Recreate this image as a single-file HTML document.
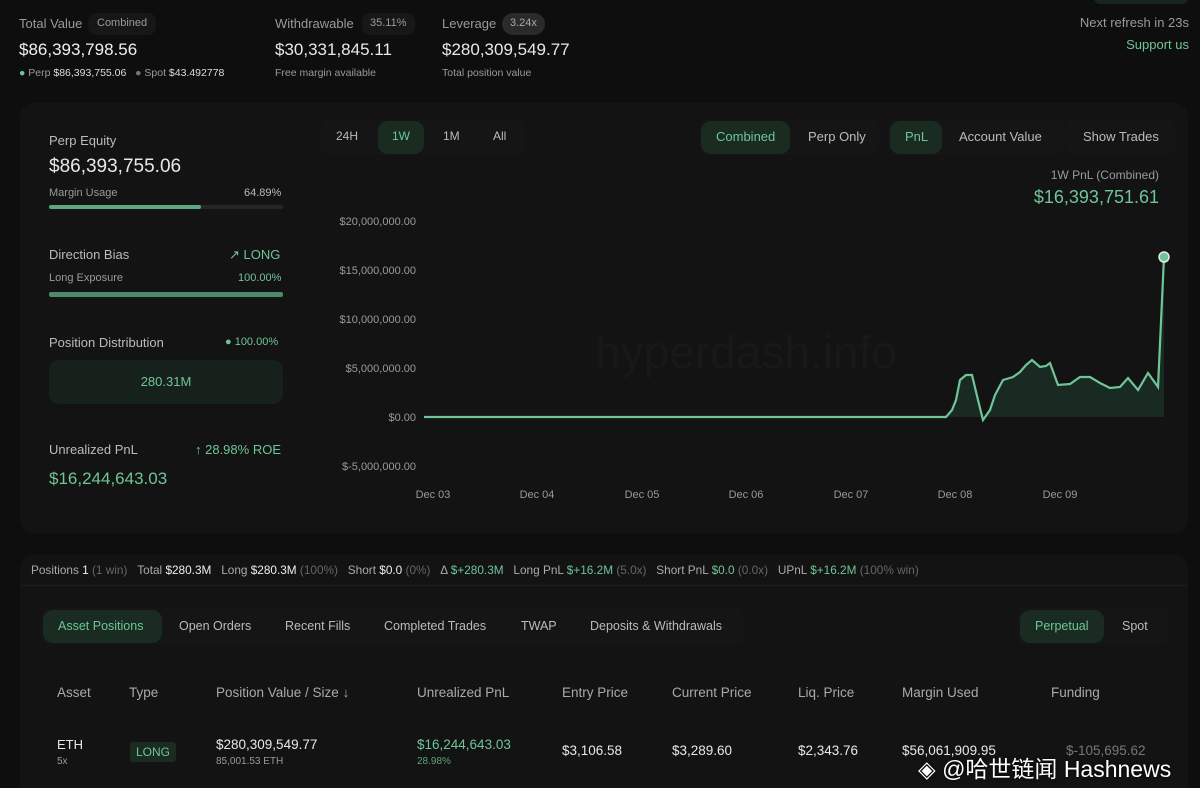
<!DOCTYPE html>
<html><head><meta charset="utf-8"><style>
*{box-sizing:border-box;margin:0;padding:0}
html,body{width:1200px;height:788px;overflow:hidden}
body{background:#0e0e0e;font-family:"Liberation Sans",sans-serif;color:#e8e8e8;position:relative}
.a{position:absolute;white-space:nowrap}
.g{color:#6fc597}.m{color:#9a9a9a}
.pill{position:absolute;border-radius:10px;background:#1b1b1b}
.sel{background:#1a2b22;color:#6fc597}
.card{position:absolute;background:#131313;border-radius:14px}
</style></head><body>
<!-- top -->
<div class="a m" style="left:19px;top:16px;font-size:13px">Total Value</div>
<div class="a" style="left:88px;top:13px;height:22px;padding:4px 9px;border-radius:8px;background:#171717;font-size:11px;color:#9a9a9a">Combined</div>
<div class="a" style="left:19px;top:40px;font-size:17px;color:#f0f0f0">$86,393,798.56</div>
<div class="a" style="left:19px;top:67px;font-size:10.5px;color:#9a9a9a"><span class="g">●</span> Perp <span style="color:#ddd">$86,393,755.06</span> &nbsp;&nbsp;<span style="color:#777">●</span> Spot <span style="color:#ddd">$43.492778</span></div>
<div class="a m" style="left:275px;top:16px;font-size:13px">Withdrawable</div>
<div class="a" style="left:362px;top:13px;height:22px;padding:4px 8px;border-radius:8px;background:#171717;font-size:11px;color:#9a9a9a">35.11%</div>
<div class="a" style="left:275px;top:40px;font-size:17px">$30,331,845.11</div>
<div class="a m" style="left:275px;top:67px;font-size:10.5px">Free margin available</div>
<div class="a m" style="left:442px;top:16px;font-size:13px">Leverage</div>
<div class="a" style="left:502px;top:13px;height:22px;padding:4px 8px;border-radius:11px;background:#2a2a2a;font-size:11px;color:#aaa">3.24x</div>
<div class="a" style="left:442px;top:40px;font-size:17px">$280,309,549.77</div>
<div class="a m" style="left:442px;top:67px;font-size:10.5px">Total position value</div>
<div class="a" style="left:1094px;top:-10px;width:94px;height:14px;border-radius:6px;background:#17251d"></div>
<div class="a m" style="right:11px;top:15px;font-size:13px">Next refresh in 23s</div>
<div class="a g" style="right:11px;top:37px;font-size:13px">Support us</div>

<!-- main card -->
<div class="card" style="left:20px;top:103px;width:1168px;height:430px"></div>
<div class="a" style="left:49px;top:133px;font-size:13px;color:#bbb">Perp Equity</div>
<div class="a" style="left:49px;top:156px;font-size:19px">$86,393,755.06</div>
<div class="a m" style="left:49px;top:187px;font-size:11px">Margin Usage</div>
<div class="a" style="left:244px;top:187px;font-size:11px;color:#bbb">64.89%</div>
<div class="a" style="left:49px;top:205px;width:234px;height:4px;border-radius:2px;background:#262626"></div>
<div class="a" style="left:49px;top:205px;width:152px;height:4px;border-radius:2px;background:#5fa57f"></div>
<div class="a" style="left:49px;top:247px;font-size:13px;color:#bbb">Direction Bias</div>
<div class="a g" style="left:229px;top:247px;font-size:13px">↗ LONG</div>
<div class="a m" style="left:49px;top:272px;font-size:11px">Long Exposure</div>
<div class="a g" style="left:238px;top:272px;font-size:11px">100.00%</div>
<div class="a" style="left:49px;top:292px;width:234px;height:5px;border-radius:2px;background:#4e8a6a"></div>
<div class="a" style="left:49px;top:335px;font-size:13px;color:#bbb">Position Distribution</div>
<div class="a g" style="left:225px;top:336px;font-size:11px">● 100.00%</div>
<div class="a g" style="left:49px;top:360px;width:234px;height:44px;border-radius:10px;background:#17211b;text-align:center;line-height:44px;font-size:13px">280.31M</div>
<div class="a" style="left:49px;top:442px;font-size:13px;color:#bbb">Unrealized PnL</div>
<div class="a g" style="left:195px;top:442px;font-size:13px">↑ 28.98% ROE</div>
<div class="a g" style="left:49px;top:469px;font-size:17px">$16,244,643.03</div>

<!-- time tabs -->
<div class="pill" style="left:320px;top:119px;width:205px;height:36px;background:#151515"></div>
<div class="a" style="left:336px;top:129px;font-size:12px;color:#bbb">24H</div>
<div class="pill sel" style="left:378px;top:121px;width:46px;height:33px"></div>
<div class="a g" style="left:392px;top:129px;font-size:12px">1W</div>
<div class="a" style="left:443px;top:129px;font-size:12px;color:#bbb">1M</div>
<div class="a" style="left:493px;top:129px;font-size:12px;color:#bbb">All</div>
<div class="pill" style="left:699px;top:119px;width:180px;height:36px;background:#151515"></div>
<div class="pill sel" style="left:701px;top:121px;width:89px;height:33px"></div>
<div class="a g" style="left:716px;top:129px;font-size:13px">Combined</div>
<div class="a" style="left:808px;top:129px;font-size:13px;color:#bbb">Perp Only</div>
<div class="pill" style="left:888px;top:119px;width:177px;height:36px;background:#151515"></div>
<div class="pill sel" style="left:890px;top:121px;width:52px;height:33px"></div>
<div class="a g" style="left:905px;top:129px;font-size:13px">PnL</div>
<div class="a" style="left:959px;top:129px;font-size:13px;color:#bbb">Account Value</div>
<div class="pill" style="left:1066px;top:119px;width:110px;height:36px;background:#151515"></div>
<div class="a" style="left:1083px;top:129px;font-size:13px;color:#bbb">Show Trades</div>
<div class="a m" style="right:41px;top:168px;font-size:12px">1W PnL (Combined)</div>
<div class="a g" style="right:41px;top:187px;font-size:18px">$16,393,751.61</div>

<!-- chart -->
<svg class="a" style="left:0;top:0" width="1200" height="540">
<g font-family="Liberation Sans" font-size="11" fill="#9a9a9a" text-anchor="end">
<text x="416" y="225">$20,000,000.00</text><text x="416" y="274">$15,000,000.00</text>
<text x="416" y="323">$10,000,000.00</text><text x="416" y="372">$5,000,000.00</text>
<text x="416" y="421">$0.00</text><text x="416" y="470">$-5,000,000.00</text>
</g>
<g font-family="Liberation Sans" font-size="11" fill="#9a9a9a" text-anchor="middle">
<text x="433" y="498">Dec 03</text><text x="537" y="498">Dec 04</text><text x="642" y="498">Dec 05</text><text x="746" y="498">Dec 06</text><text x="851" y="498">Dec 07</text><text x="955" y="498">Dec 08</text><text x="1060" y="498">Dec 09</text>
</g>
<text x="746" y="368" font-family="Liberation Sans" font-size="46" fill="#181818" text-anchor="middle">hyperdash.info</text>
<path d="M946,417 L952,410 L956,400 L960,380 L966,375 L972,375 L978,400 L983,420 L990,410 L995,395 L1003,380 L1013,377 L1020,372 L1026,365 L1032,360 L1040,367 L1046,366 L1050,363 L1058,385 L1070,384 L1080,377 L1090,377 L1100,383 L1110,388 L1120,387 L1128,378 L1138,390 L1148,373 L1158,387 L1164,257 L1164,417 Z" fill="#1c3127" opacity=".8"/>
<path d="M424,417 L946,417 L952,410 L956,400 L960,380 L966,375 L972,375 L978,400 L983,420 L990,410 L995,395 L1003,380 L1013,377 L1020,372 L1026,365 L1032,360 L1040,367 L1046,366 L1050,363 L1058,385 L1070,384 L1080,377 L1090,377 L1100,383 L1110,388 L1120,387 L1128,378 L1138,390 L1148,373 L1158,387 L1164,257" fill="none" stroke="#6fc597" stroke-width="2.2"/>
<circle cx="1164" cy="257" r="5" fill="#6fc597" stroke="#e8e8e8" stroke-width="1.5"/>
</svg>

<!-- bottom card -->
<div class="card" style="left:20px;top:555px;width:1168px;height:260px"></div>
<div class="a" style="left:20px;top:585px;width:1168px;height:1px;background:#1e1e1e"></div>
<div class="a" style="left:31px;top:563px;font-size:11.8px;color:#aaa">Positions <span style="color:#eee">1</span> <span style="color:#666">(1 win)</span> &nbsp;&nbsp;Total <span style="color:#eee">$280.3M</span> &nbsp;&nbsp;Long <span style="color:#eee">$280.3M</span> <span style="color:#666">(100%)</span> &nbsp;&nbsp;Short <span style="color:#eee">$0.0</span> <span style="color:#666">(0%)</span> &nbsp;&nbsp;Δ <span class="g">$+280.3M</span> &nbsp;&nbsp;Long PnL <span class="g">$+16.2M</span> <span style="color:#666">(5.0x)</span> &nbsp;&nbsp;Short PnL <span class="g">$0.0</span> <span style="color:#666">(0.0x)</span> &nbsp;&nbsp;UPnL <span class="g">$+16.2M</span> <span style="color:#666">(100% win)</span></div>
<div class="pill" style="left:40px;top:607px;width:704px;height:38px;background:#151515"></div>
<div class="pill sel" style="left:43px;top:610px;width:119px;height:33px"></div>
<div class="a g" style="left:58px;top:619px;font-size:12.5px">Asset Positions</div>
<div class="a" style="left:179px;top:619px;font-size:12.5px;color:#bbb">Open Orders</div>
<div class="a" style="left:285px;top:619px;font-size:12.5px;color:#bbb">Recent Fills</div>
<div class="a" style="left:384px;top:619px;font-size:12.5px;color:#bbb">Completed Trades</div>
<div class="a" style="left:521px;top:619px;font-size:12.5px;color:#bbb">TWAP</div>
<div class="a" style="left:590px;top:619px;font-size:12.5px;color:#bbb">Deposits &amp; Withdrawals</div>
<div class="pill" style="left:1017px;top:607px;width:152px;height:38px;background:#151515"></div>
<div class="pill sel" style="left:1020px;top:610px;width:84px;height:33px"></div>
<div class="a g" style="left:1035px;top:619px;font-size:12.5px">Perpetual</div>
<div class="a" style="left:1122px;top:619px;font-size:12.5px;color:#bbb">Spot</div>
<div class="a" style="left:0;top:685px;font-size:13.5px;color:#aaa">
<span class="a" style="left:57px">Asset</span><span class="a" style="left:129px">Type</span><span class="a" style="left:216px">Position Value / Size ↓</span><span class="a" style="left:417px">Unrealized PnL</span><span class="a" style="left:562px">Entry Price</span><span class="a" style="left:672px">Current Price</span><span class="a" style="left:798px">Liq. Price</span><span class="a" style="left:902px">Margin Used</span><span class="a" style="left:1051px">Funding</span></div>
<div class="a" style="left:57px;top:737px;font-size:13px">ETH</div>
<div class="a m" style="left:57px;top:756px;font-size:10px">5x</div>
<div class="a g" style="left:130px;top:742px;padding:3px 6px;background:#1a2b22;border-radius:3px;font-size:12px">LONG</div>
<div class="a" style="left:216px;top:737px;font-size:13.5px">$280,309,549.77</div>
<div class="a m" style="left:216px;top:756px;font-size:10px">85,001.53 ETH</div>
<div class="a g" style="left:417px;top:737px;font-size:13.5px">$16,244,643.03</div>
<div class="a g" style="left:417px;top:756px;font-size:10px;opacity:.8">28.98%</div>
<div class="a" style="left:562px;top:743px;font-size:13.5px">$3,106.58</div>
<div class="a" style="left:672px;top:743px;font-size:13.5px">$3,289.60</div>
<div class="a" style="left:798px;top:743px;font-size:13.5px">$2,343.76</div>
<div class="a" style="left:902px;top:743px;font-size:13.5px">$56,061,909.95</div>
<div class="a" style="left:1066px;top:743px;font-size:13.5px;color:#777">$-105,695.62</div>
<div class="a" style="left:918px;top:750px;font-size:23px;color:#fff;font-family:'Liberation Sans','Noto Sans CJK SC',sans-serif;text-shadow:0 0 3px #000">◈ @哈世链闻 Hashnews</div>
</body></html>
